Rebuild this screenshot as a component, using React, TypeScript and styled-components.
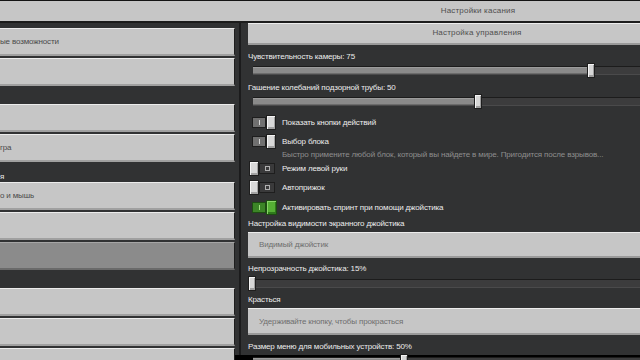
import React from 'react'
import styled, { createGlobalStyle } from 'styled-components'

const GlobalStyle = createGlobalStyle`
  html, body { margin: 0; padding: 0; background: #000; }
  body { font-family: "Liberation Sans", Arial, sans-serif; letter-spacing: -0.15px; }
  * { box-sizing: border-box; }
`

const Screen = styled.div`
  width: 640px;
  height: 360px;
  overflow: hidden;
  background: #000;
  display: flex;
  flex-direction: column;
`

const TopBar = styled.div`
  height: 23px;
  flex: none;
  border-top: 1px solid #141414;
  border-bottom: 2px solid #1c1c1c;
  background: #c6c6c6;
  display: grid;
  grid-template-columns: 242px 472px;
`

const Title = styled.div`
  grid-column: 2;
  text-align: center;
  font-size: 8px;
  line-height: 20px;
  color: #4f4f4f;
  letter-spacing: 0.2px;
`

const Body = styled.div`
  height: 332px;
  flex: none;
  display: flex;
  background: #313233;
`

const LeftPanel = styled.div`
  width: 239px;
  flex: none;
  padding-top: 5px;
  display: flex;
  flex-direction: column;
`

const Divider = styled.div`
  width: 2px;
  flex: none;
  background: #1b1b1c;
`

const MenuButton = styled.div<{ $active?: boolean }>`
  height: 28px;
  margin: 0 4px 2px 0;
  flex: none;
  background: ${p => (p.$active ? '#8b8b8b' : '#c6c6c6')};
  border-top: 1px solid ${p => (p.$active ? '#a6a6a6' : '#ececec')};
  border-bottom: 2px solid ${p => (p.$active ? '#6a6a6a' : '#a0a0a0')};
  border-right: 1px solid #1e1e1e;
  color: #4a4a4a;
  font-size: 8px;
  line-height: 25px;
  white-space: nowrap;
  overflow: hidden;
`

const SectionHead = styled.div<{ $h: number }>`
  height: ${p => p.$h}px;
  flex: none;
  color: #e8e8e8;
  font-size: 8px;
  display: flex;
  align-items: flex-end;
  padding-bottom: 1px;
`

const RightPanel = styled.div`
  width: 472px;
  flex: none;
  padding: 0 7px;
  display: flex;
  flex-direction: column;
`

const HeaderBox = styled.div`
  height: 22px;
  flex: none;
  background: #c6c6c6;
  border-top: 1px solid #ececec;
  border-bottom: 2px solid #9a9a9a;
  text-align: center;
  color: #4f4f4f;
  font-size: 8px;
  line-height: 18px;
  letter-spacing: 0.2px;
`

const Label = styled.div<{ $h: number; $pt: number; $muted?: boolean; $indent?: number }>`
  height: ${p => p.$h}px;
  flex: none;
  padding-top: ${p => p.$pt}px;
  padding-left: ${p => p.$indent ?? 0}px;
  font-size: 8px;
  line-height: 10px;
  color: ${p => (p.$muted ? '#8e8e8e' : '#ececec')};
  white-space: nowrap;
`

const SliderWrap = styled.div`
  height: 15px;
  flex: none;
  position: relative;
`

const Track = styled.div<{ $inset: number }>`
  margin: 3px 0 0 ${p => p.$inset}px;
  height: 9px;
  background: #3c3c3d;
  border-top: 1px solid #1c1c1c;
  border-bottom: 1px solid #4a4a4b;
  display: flex;
`

const Fill = styled.div`
  height: 100%;
  background: #8a8a8a;
  border-top: 1px solid #9c9c9c;
  border-bottom: 1px solid #6c6c6c;
`

const Knob = styled.div`
  position: absolute;
  top: 0;
  width: 8px;
  height: 15px;
  background: #d6d6d6;
  border: 1px solid #1e1e1e;
  box-shadow: inset 1px 1px 0 #f4f4f4, inset -1px -2px 0 #9e9e9e;
`

const ToggleRow = styled.div<{ $h: number }>`
  height: ${p => p.$h}px;
  flex: none;
  display: flex;
  align-items: center;
`

const ToggleBox = styled.div<{ $on: boolean }>`
  width: 34px;
  flex: none;
  display: flex;
  align-items: center;
  padding-left: ${p => (p.$on ? 4 : 1)}px;
`

const ToggleTrack = styled.div<{ $tone: 'grey' | 'green' | 'off' }>`
  width: ${p => (p.$tone === 'off' ? 16 : 14)}px;
  height: 11px;
  display: flex;
  align-items: center;
  justify-content: center;
  border: 1px solid ${p => (p.$tone === 'green' ? '#1d4d12' : '#1e1e1e')};
  background: ${p => (p.$tone === 'green' ? '#3c8527' : p.$tone === 'grey' ? '#707070' : '#3a3a3b')};
`

const ToggleKnob = styled.div<{ $green?: boolean }>`
  width: ${p => (p.$green ? 11 : 10)}px;
  height: 15px;
  border: 1px solid ${p => (p.$green ? '#1d4d12' : '#1e1e1e')};
  background: ${p => (p.$green ? '#55b034' : '#d8d8d8')};
  box-shadow: inset 1px 1px 0 ${p => (p.$green ? '#8ad46a' : '#f4f4f4')},
    inset -1px -2px 0 ${p => (p.$green ? '#2f7a1c' : '#a2a2a2')};
`

const OnMark = styled.div<{ $green?: boolean }>`
  width: 1px;
  height: 5px;
  background: ${p => (p.$green ? '#9fe27f' : '#d4d4d4')};
`

const OffMark = styled.div`
  width: 5px;
  height: 5px;
  border: 1px solid #b0b0b0;
`

const ToggleText = styled.span`
  font-size: 8px;
  color: #ececec;
  white-space: nowrap;
`

const FieldBox = styled.div<{ $h: number }>`
  height: ${p => p.$h}px;
  flex: none;
  background: #c6c6c6;
  border-top: 1px solid #ececec;
  border-bottom: 2px solid #9a9a9a;
  padding-left: 11px;
  display: flex;
  align-items: center;
  color: #6e6e6e;
  font-size: 8px;
`

function Slider({ knob, inset, fill }: { knob: number; inset: number; fill: boolean }) {
  return (
    <SliderWrap>
      <Track $inset={inset}>{fill && <Fill style={{ width: Math.max(knob - inset, 0) }} />}</Track>
      <Knob style={{ left: knob }} />
    </SliderWrap>
  )
}

function Toggle({ on, green, text, h }: { on: boolean; green?: boolean; text: string; h: number }) {
  return (
    <ToggleRow $h={h}>
      <ToggleBox $on={on}>
        {on ? (
          <>
            <ToggleTrack $tone={green ? 'green' : 'grey'}>
              <OnMark $green={green} />
            </ToggleTrack>
            <ToggleKnob $green={green} />
          </>
        ) : (
          <>
            <ToggleKnob />
            <ToggleTrack $tone="off">
              <OffMark />
            </ToggleTrack>
          </>
        )}
      </ToggleBox>
      <ToggleText>{text}</ToggleText>
    </ToggleRow>
  )
}

export default function App() {
  return (
    <Screen>
      <GlobalStyle />
      <TopBar>
        <Title>Настройки касания</Title>
      </TopBar>
      <Body>
        <LeftPanel>
          <MenuButton>ые возможности</MenuButton>
          <MenuButton />
          <SectionHead $h={16} />
          <MenuButton />
          <MenuButton>гра</MenuButton>
          <SectionHead $h={18}>я</SectionHead>
          <MenuButton>о и мышь</MenuButton>
          <MenuButton />
          <MenuButton $active />
          <SectionHead $h={16} />
          <MenuButton />
          <MenuButton />
          <MenuButton />
        </LeftPanel>
        <Divider />
        <RightPanel>
          <HeaderBox>Настройка управления</HeaderBox>
          <Label $h={18} $pt={7}>Чувствительность камеры: 75</Label>
          <Slider knob={339} inset={5} fill />
          <Label $h={16} $pt={5}>Гашение колебаний подзорной трубы: 50</Label>
          <Slider knob={226} inset={5} fill />
          <ToggleRow $h={3} />
          <Toggle on h={20} text="Показать кнопки действий" />
          <Toggle on h={18} text="Выбор блока" />
          <Label $h={10} $pt={0} $muted $indent={34}>
            Быстро примените любой блок, который вы найдете в мире. Пригодится после взрывов...
          </Label>
          <Toggle on={false} h={16} text="Режим левой руки" />
          <Toggle on={false} h={22} text="Автоприжок" />
          <Toggle on green h={18} text="Активировать спринт при помощи джойстика" />
          <Label $h={16} $pt={3}>Настройка видимости экранного джойстика</Label>
          <FieldBox $h={26}>Видимый джойстик</FieldBox>
          <Label $h={18} $pt={6}>Непрозрачность джойстика: 15%</Label>
          <Slider knob={0} inset={8} fill={false} />
          <Label $h={17} $pt={4}>Красться</Label>
          <FieldBox $h={27}>Удерживайте кнопку, чтобы прокрасться</FieldBox>
          <Label $h={19} $pt={7}>Размер меню для мобильных устройств: 50%</Label>
          <Slider knob={152} inset={5} fill />
        </RightPanel>
      </Body>
    </Screen>
  )
}
